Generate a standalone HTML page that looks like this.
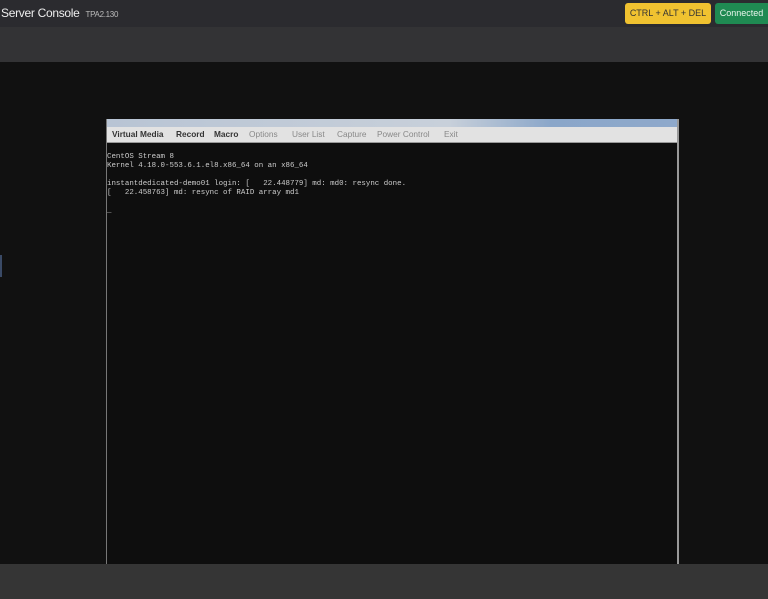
<!DOCTYPE html>
<html><head><style>
body{margin:0;width:768px;height:599px;overflow:hidden;background:#111;font-family:"Liberation Sans",sans-serif;position:relative}
.hdr{position:absolute;left:0;top:0;width:768px;height:27px;background:#2b2b2f}
.band{position:absolute;left:0;top:27px;width:768px;height:35px;background:#333335}
.bot{position:absolute;left:0;top:564px;width:768px;height:35px;background:#353535}
.title{position:absolute;left:1px;top:6px;color:#eee;font-size:12px;letter-spacing:-0.3px}
.title small{font-size:8px;color:#bbb;margin-left:6px}
.btn{position:absolute;top:3px;height:21px;border-radius:3px;font-size:9px;line-height:21px;text-align:center}
.win{position:absolute;left:106px;top:119px;width:570px;height:445px;border-left:1px solid #777;border-right:2px solid #999;background:#0e0e0e}
.tb{height:8px;background:linear-gradient(90deg,#b8c4d4 0%,#c8d0da 60%,#8aa6c9 78%,#8fa9cb 100%)}
.mb{position:relative;height:15px;background:#e2e2e2;border-bottom:1px solid #999;font-size:8.3px;line-height:15px;color:#333;white-space:nowrap}
.mb span{position:absolute;top:0}
.mb .d{color:#888}
pre{margin:0;padding:10px 0 0 0;color:#ccc;font-family:"Liberation Mono",monospace;font-size:7.45px;line-height:9px}
</style></head><body>
<div class="hdr"><div class="title">Server Console<small>TPA2.130</small></div>
<div class="btn" style="left:625px;width:86px;background:#f0c230;color:#333">CTRL + ALT + DEL</div>
<div class="btn" style="left:715px;width:53px;border-radius:3px 0 0 3px;background:#1f8a52;color:#e8f5ec">Connected</div></div>
<div class="band"></div>
<div style="position:absolute;left:0;top:255px;width:2px;height:22px;background:#3a4a66"></div>
<div class="win"><div class="tb"></div>
<div class="mb"><span style="left:5px"><b>Virtual Media</b></span><span style="left:69px"><b>Record</b></span><span style="left:107px"><b>Macro</b></span><span class="d" style="left:142px">Options</span><span class="d" style="left:185px">User List</span><span class="d" style="left:230px">Capture</span><span class="d" style="left:270px">Power Control</span><span class="d" style="left:337px">Exit</span></div>
<pre>CentOS Stream 8
Kernel 4.18.0-553.6.1.el8.x86_64 on an x86_64

instantdedicated-demo01 login: [   22.448779] md: md0: resync done.
[   22.458763] md: resync of RAID array md1

_</pre></div>
<div class="bot"></div>
</body></html>
